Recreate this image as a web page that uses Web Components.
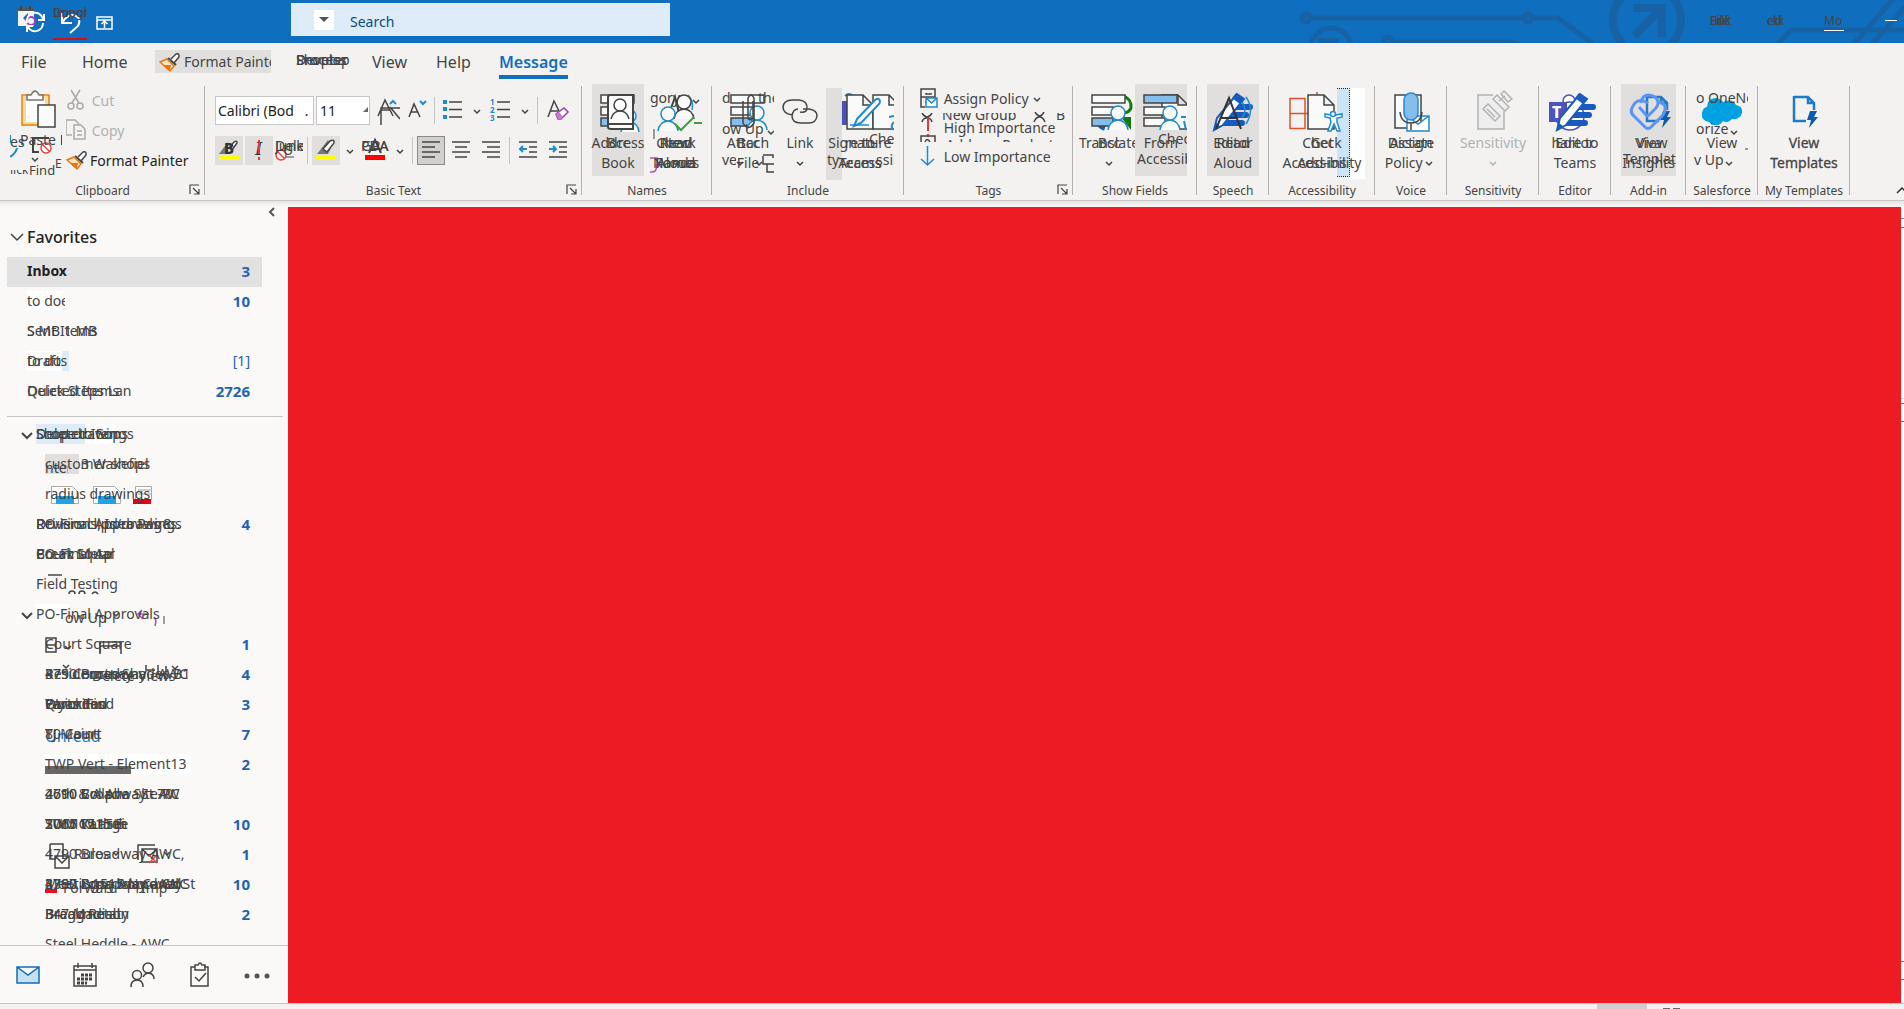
<!DOCTYPE html>
<html lang="en">
<head>
<meta charset="utf-8">
<title>Inbox</title>
<style>
    html, body { margin: 0; height: 100%; }
    body {
        font-family: "Noto Sans", "Open Sans", sans-serif;
        font-size: 14px;
        color: #444;
        background: #f3f2f1;
        overflow: hidden;
    }
    mail-app { height: 100%; }
</style>
</head>
<body>
<mail-app>
    <title-bar slot="title"></title-bar>
    <tab-strip slot="tabs"></tab-strip>

    <ribbon-bar slot="ribbon">
        <ribbon-group caption="Clipboard" launcher>
            <paste-tools></paste-tools>
        </ribbon-group>
        <ribbon-group caption="Basic Text" launcher>
            <text-tools></text-tools>
        </ribbon-group>
        <ribbon-group caption="Names" gap>
            <ribbon-button icon="address" line1="Address|Bcc" line2="Book" active></ribbon-button>
            <ribbon-button icon="names" line1="Check|Read|New" line2="Names|Aloud|Fonda"></ribbon-button>
            <over-text x="68" y="4" w="34">gory</over-text>
        </ribbon-group>
        <ribbon-group caption="Include">
            <ribbon-button icon="attach" line1="Attach|Bcc" line2="File"></ribbon-button>
            <ribbon-button icon="link" line1="Link" chevron></ribbon-button>
            <ribbon-button icon="signature" line1="Signature|re to" line2="Teams|Access" width="68"></ribbon-button>
            <over-text x="10" y="4" w="12">d</over-text>
            <over-text x="46" y="4" w="16">the</over-text>
            <over-text x="10" y="35" w="44">ow Up</over-text>
            <over-text x="10" y="66" w="14">ve</over-text>
            <over-text x="157" y="45" w="25">Check</over-text>
            <over-text x="115" y="66" w="14">ty</over-text>
            <over-text x="164" y="66" w="18">ssib</over-text>
        </ribbon-group>
        <ribbon-group caption="Tags" launcher>
            <tag-tools></tag-tools>
        </ribbon-group>
        <ribbon-group caption="Show Fields">
            <ribbon-button icon="bcc" line1="Translate|Bcc" chevron></ribbon-button>
            <ribbon-button icon="from" line1="From" line2=" " active></ribbon-button>
            <over-text x="85" y="45" w="29">Check</over-text>
            <over-text x="64" y="65" w="50">Accessibility</over-text>
        </ribbon-group>
        <ribbon-group caption="Speech">
            <ribbon-button icon="read" line1="Read|Editor" line2="Aloud" active></ribbon-button>
        </ribbon-group>
        <ribbon-group caption="Accessibility">
            <ribbon-button icon="access" line1="Check|Get" line2="Accessibility|Add-ins" width="86"></ribbon-button>
        </ribbon-group>
        <ribbon-group caption="Voice">
            <ribbon-button icon="dictate" line1="Dictate|Assign" line2="Policy    "></ribbon-button>
        </ribbon-group>
        <ribbon-group caption="Sensitivity">
            <ribbon-button icon="sensitivity" line1="Sensitivity" chevron width="72" off></ribbon-button>
        </ribbon-group>
        <ribbon-group caption="Editor">
            <ribbon-button icon="editor" line1="Editor|hare to" line2="Teams"></ribbon-button>
        </ribbon-group>
        <ribbon-group caption="Add-in">
            <ribbon-button icon="insights" line1="Viva|  View" line2="Insights" width="55" active></ribbon-button>
            <over-text x="12" y="65" w="53">Templates</over-text>
        </ribbon-group>
        <ribbon-group caption="Salesforce">
            <ribbon-button icon="salesforce" line1="View" line2=" "></ribbon-button>
            <over-text x="10" y="4" w="52">o OneNote</over-text>
            <over-text x="10" y="35" w="34">orize</over-text>
            <over-text x="8" y="66" w="30">v Up</over-text>
        </ribbon-group>
        <ribbon-group caption="My Templates">
            <ribbon-button icon="templates" line1="View" line2="Templates" width="72" strong></ribbon-button>
        </ribbon-group>
    </ribbon-bar>

    <folder-pane slot="side">
        <folder-row slot="favorites" name="Inbox" count="3" selected></folder-row>
        <folder-row slot="favorites" name="to do" count="10" marks="0:35:4:20:#fff"><over-text x="54" y="4" w="4">e</over-text></folder-row>
        <folder-row slot="favorites" name="Sent Items|S MB 1 MB"></folder-row>
        <folder-row slot="favorites" name="Drafts|to do" count="[1]" marks="0:35:4:20:#fff,35:7:4:20:#deecf9"></folder-row>
        <folder-row slot="favorites" name="Deleted Items|Quick Steps Lan" count="2726"></folder-row>

        <folder-row level="1" open name="Shop drawings|Deleted Items|Scope to Sop" marks="0:49:4:20:#deecf9,49:30:4:20:#fff"></folder-row>
        <folder-row level="2" name="customer shops" marks="0:34:4:20:#e1dfdd"><over-text x="74" y="4" w="68">3 Wakefiel</over-text><over-text x="38" y="8" w="23">nter</over-text></folder-row>
        <folder-row level="2" name="radius drawings" icon="files"></folder-row>
        <folder-row level="1" name="PO-Final Approvals 8.|Drivers clips/drawings|Revisions, Idea Pages." count="4"></folder-row>
        <folder-row level="1" name="PO-Final Ap|Break Metal|Court Squar"></folder-row>
        <folder-row level="1" name="Field Testing" icon="marks"></folder-row>
        <folder-row level="1" open name="PO-Final Approvals" icon="reply" marks="0:33:4:20:#fff"><over-text x="58" y="8" w="44">ow Up</over-text></folder-row>
        <folder-row level="2" name="Court Square" count="1" icon="boxes"></folder-row>
        <folder-row level="2" name="4790 Broadway - AWC|Residences Shades B1|375 Courtney" count="4" icon="trash"><over-text x="85" y="6" w="94">Delete Views</over-text></folder-row>
        <folder-row level="2" name="Favorites|Quick Find|Parts End|Wyandan" count="3"></folder-row>
        <folder-row level="2" name="80 Court|TJ Maint" count="7"><over-text x="38" y="6" w="60" size="16" color="#1083d6">Unread</over-text></folder-row>
        <folder-row level="2" name="TWP Vert - Element13" count="2" marks="0:146:4:20:#fff,0:86:16:8:#666"></folder-row>
        <folder-row level="2" name="4790 Broadway - AW|2610 Col Ave - St 70|46th &amp; Alpha Site-PC"></folder-row>
        <folder-row level="2" name="3065 W 15th|TWMC Large|2011 Karlsei|SUM 1515 E" count="10"></folder-row>
        <folder-row level="2" name="4790 Broadway-AWC," count="1" icon="rules"><over-text x="67" y="4" w="36">Rules</over-text></folder-row>
        <folder-row level="2" name="4790 Broadway - AWC|2300 E 1515 N Canal St|Meetings - Approved|3767 Long Island Cty" count="10" marks="0:12:19:4:#e81123"><over-text x="56" y="8" w="56">Forward</over-text><over-text x="134" y="8" w="30">Imp</over-text></folder-row>
        <folder-row level="2" name="347 Madison|Breakmetal|Bragg Realty" count="2"></folder-row>
        <folder-row level="2" name="Steel Heddle - AWC"></folder-row>
    </folder-pane>
</mail-app>

<script>
const INK = '#444';
const BLUE = '#1e8bcd';
const SKY = '#83beec';

// shared shapes
const chevron = (x, y, c = INK) => `<path d="M${x - 3} ${y - 2}l3 3 3-3" stroke="${c}" stroke-width="1.5" fill="none"/>`;
const person = (x, y, c, r = 7) => `<g stroke="${c}" stroke-width="1.5" fill="#fafafa"><path d="M${x - r - 3} ${y + r + 10}q1-9 ${r + 3}-10 ${r + 2} 1 ${r + 3} 10"/><circle cx="${x}" cy="${y}" r="${r}"/></g>`;
const bars = (x, fill1, fill3) => `<g stroke="${INK}" stroke-width="1.5"><path d="M${x} 91h33v8h-33z" fill="${fill1}"/><path d="M${x} 103h21v8h-21z" fill="#fafafa"/><path d="M${x} 114h21v8h-21z" fill="${fill3}"/></g>`;
const page = (x, w = 26) => `<path d="M${x} 91h${w - 10}l10 10v24h-${w}zM${x + w - 10} 91v10h10" fill="#fafafa" stroke="${INK}" stroke-width="1.5"/>`;
const pen = (x) => `<path d="M${x + 22} 103h14M${x + 16} 111h16M${x + 10} 119h18" stroke="#185abd" stroke-width="6" stroke-linecap="round"/><path d="M${x} 126l3-12 20-24 7 5-21 26z" fill="#fff" stroke="#185abd" stroke-width="2"/><path d="M${x + 22} 89l8 6-4 5-8-6zM${x} 126l2-7 5 4z" fill="#185abd"/>`;
const brush = (x, y) => `<path d="M${x + 11} ${y + 6}l5-5q2-1 3 1v2l-5 6" fill="#fff" stroke="${INK}" stroke-width="1.5"/><path d="M${x + 8} ${y + 5}l8 7" stroke="${INK}" stroke-width="2"/><path d="M${x} ${y + 9}l7-3 7 7-4 5z" fill="#fbe6c8" stroke="#e8780c" stroke-width="1.5"/><path d="M${x + 3} ${y + 12}l8 0-1 5-2 0z" fill="#e8780c"/>`;
const bolt = (x) => `<path d="M${x} 93h14l6 6v7M${x + 14} 93v6h6M${x} 92v25h12" fill="none" stroke="#1f7bc4" stroke-width="2.5"/><path d="M${x + 16} 107h7l-3 6h4l-9 11 2-8h-4z" fill="#0b5cad"/>`;
const lines = (xs) => `<path d="${xs.map((p, i) => `M${p[0]} ${6 + i * 5}h${p[1]}`).join('')}" stroke="${INK}" stroke-width="1.5"/>`;

// name: [viewBox, markup]
const ICONS = {
    sync: ['0 0 30 36', `<path d="M1 5h16v16h-16z" fill="#f4f4f4"/><path d="M1 3h16v3h-16z" fill="#555"/><path d="M4 1v4M13 1v4" stroke="#444" stroke-width="2"/><path d="M6 13l5-5v10z" fill="#2b5cc4"/><circle cx="14" cy="16" r="4" fill="none" stroke="#a044b4" stroke-width="2"/><path d="M10 18a8 8 0 0 1 16-4M27 9v6h-6M26 18a8 8 0 0 1-15 4M10 27v-6h6" fill="none" stroke="#fff" stroke-width="2"/><path d="M1 34h2M10 34h2M24 34h3" stroke="#555"/>`],
    undo: ['0 0 34 36', `<path d="M9 8v10h10M9 18q5-9 12-8 8 3 4 11l-8 7" fill="none" stroke="#fff" stroke-width="2"/><path d="M0 34h34" stroke="#d1101c" stroke-width="2"/>`],
    popout: ['0 0 18 36', `<path d="M1 12h15v12h-15zM1 15h15M8.500 23v-7M5.500 19l3-3 3 3" fill="none" stroke="#fff" stroke-width="1.500"/>`],
    brush: ['0 0 22 22', brush(1, 2)],
    scissors: ['0 0 20 22', `<path d="M5 1l8 13M14 1l-8 13" stroke="#aaa" stroke-width="1.5"/><circle cx="5" cy="17" r="3" fill="none" stroke="#aaa" stroke-width="1.5"/><circle cx="14" cy="17" r="3" fill="none" stroke="#aaa" stroke-width="1.5"/>`],
    copy: ['0 0 20 22', `<path d="M6 16h-6V1h9l4 4M8 6h7l4 4v10h-11zM11 12h5M11 16h5" fill="none" stroke="#aaa" stroke-width="1.500"/>`],
    paste: ['10 84 52 92', `<path d="M24 97h23v27h-23z" fill="#fff" stroke="#f9dc9c" stroke-width="4"/><path d="M22 95h27v30h-27z" fill="none" stroke="#e8820c" stroke-width="1.5"/><path d="M27 100v-5h4q4-8 8 0h4v5z" fill="#fafafa" stroke="#777" stroke-width="1.5"/><path d="M38 105h17v22h-17z" fill="#fafafa" stroke="${INK}" stroke-width="1.5"/><path d="M10 135v8M17 148q-1 5-7 9" stroke="${BLUE}" stroke-width="2" fill="none"/><path d="M33 138v14h6M33 138h16" stroke="${INK}" stroke-width="2" fill="none"/><circle cx="46" cy="148" r="5" fill="#fff" stroke="#e8443f" stroke-width="1.5"/><path d="M42 144l8 8" stroke="#e8443f" stroke-width="1.5"/><path d="M61.500 135v10" stroke="${INK}"/>${chevron(35, 160)}`],
    grow: ['372 96 28 29', `<path d="M378 116l7-16 8 16M380 110h10M381 125v-17h19M390 107l10 12" fill="none" stroke="${INK}" stroke-width="1.5"/><path d="M390 104l3-3 3 3" fill="none" stroke="${BLUE}" stroke-width="2"/>`],
    shrink: ['402 96 28 29', `<path d="M409 117l5-13 6 13M411 112h7" fill="none" stroke="${INK}" stroke-width="1.5"/><path d="M420 101l3 3 3-3" fill="none" stroke="${BLUE}" stroke-width="2"/>`],
    bullets: ['439 96 28 29', `<path d="M443 100h4v4h-4zM443 107h4v4h-4zM443 115h4v4h-4z" fill="${BLUE}"/><path d="M449 102h13M449 109.500h13M449 117h13" stroke="${INK}" stroke-width="1.5"/>`],
    numbers: ['487 96 28 29', `<g fill="${BLUE}" font-size="8" font-weight="700"><text x="490" y="105">1</text><text x="490" y="113">2</text><text x="490" y="121">3</text></g><path d="M497 102h13M497 109.500h13M497 117h13" stroke="${INK}" stroke-width="1.5"/>`],
    clear: ['542 96 28 29', `<path d="M548 117l6-16 5 10M550 111h8" fill="none" stroke="${INK}" stroke-width="1.5"/><path d="M556 114l8-6 4 4-7 7h-3z" fill="#fff" stroke="#9b3bab" stroke-width="1.5"/><path d="M556 114l2 5h3l2-2-4-5z" fill="#c77bd2"/>`],
    bold: ['215 136 28 29', `<path d="M219 154l9-12v12z" fill="#777"/><path d="M229 148l5-6q3-2 3 1l-5 7" fill="#fff" stroke="${INK}" stroke-width="1.5"/><path d="M219 155h20v5h-20z" fill="#ff0"/><text x="224" y="154" font-size="15" font-weight="800" fill="#333">B</text>`],
    italic: ['245 136 28 29', `<text x="255" y="155" font-size="18" font-style="italic" font-weight="700" font-family="Liberation Serif" fill="#333">I</text><path d="M259 140v14M259 157v3" stroke="#e8343f" stroke-width="2"/>`],
    underline: ['275 136 28 29', `<circle cx="281" cy="155" r="5" fill="none" stroke="#e8443f" stroke-width="1.5"/><path d="M277 151l8 8" stroke="#e8443f" stroke-width="1.500"/><path d="M286 157h8" stroke="${INK}"/><text x="283" y="155" fill="${INK}">U</text>`],
    highlight: ['312 136 28 29', `<path d="M317 154l11-14 3 8-3 6z" fill="#777"/><path d="M323 149l7-8q5-2 4 2l-7 9z" fill="#fff" stroke="${INK}" stroke-width="1.5"/><path d="M316 155h20v5h-20z" fill="#ff0"/>`],
    color: ['360 136 30 29', `<path d="M369 153l6-13 6 13M371 149h8" fill="none" stroke="${INK}" stroke-width="2"/><path d="M365 155h20v5h-20z" fill="#f00"/>`],
    left: ['0 0 28 29', lines([[5, 18], [5, 13], [5, 18], [5, 13]])],
    center: ['0 0 28 29', lines([[5, 18], [8, 12], [5, 18], [8, 12]])],
    right: ['0 0 28 29', lines([[5, 18], [10, 13], [5, 18], [10, 13]])],
    outdent: ['514 136 28 29', `<path d="M519 142h18M529 147h8M529 152h8M519 157h18" stroke="${INK}" stroke-width="1.5"/><path d="M520 149h7M523 146l-3 3 3 3" fill="none" stroke="${BLUE}" stroke-width="2"/>`],
    indent: ['544 136 28 29', `<path d="M549 142h18M559 147h8M559 152h8M549 157h18" stroke="${INK}" stroke-width="1.5"/><path d="M549 149h7M553 146l3 3-3 3" fill="none" stroke="${BLUE}" stroke-width="2"/>`],
    chevron: ['0 0 16 12', '<path d="M5 5l3 3 3-3" stroke="currentColor" stroke-width="1.5" fill="none"/>'],
    launcher: ['0 0 12 12', `<path d="M1 10V1h9M4 4l6 6M10 5v5h-5" fill="none" stroke="${INK}" stroke-width="1.2"/>`],

    address: ['592 86 52 44', `${bars(601, '#fafafa', SKY)}${person(630, 112, BLUE, 6)}<path d="M608 93q0-2 3-2h22v34h-22q-3 0-3-2zM608 120h25" fill="#fafafa" stroke="${INK}" stroke-width="2"/><circle cx="620" cy="101" r="6" fill="#fff" stroke="${INK}" stroke-width="1.500"/><path d="M611 115q2-8 9-8t9 8" fill="none" stroke="${INK}" stroke-width="1.5"/>`],
    names: ['650 86 52 92', `<path d="M688 91q6 6 4 15" fill="none" stroke="${BLUE}" stroke-width="1.500"/><path d="M669 110l6-17 5 20" fill="none" stroke="${INK}" stroke-width="2"/>${person(684, 98, INK)}${person(668, 110, BLUE)}<path d="M675 120l6 6 13-13M694 119h8" fill="none" stroke="#3f9c45" stroke-width="2"/>${chevron(696, 98)}<path d="M654 125v10" stroke="#999" stroke-width="2"/>${chevron(676, 160)}<path d="M650 154h7v8M650 168q8 1 6-8" fill="none" stroke="#a551b5" stroke-width="1.500"/>`],
    attach: ['722 86 52 92', `${bars(731, '#fafafa', SKY)}${person(757, 109, BLUE)}<path d="M753 97v17q-5 4-5-1V94q3-6 6 0v25q-6 9-11 0V97" fill="none" stroke="${INK}" stroke-width="1.500"/>${chevron(771, 129)}${chevron(740, 160)}${chevron(759, 160)}<path d="M763 151h10v3M763 152v8h4v8h7M767 160h7" fill="none" stroke="${INK}" stroke-width="1.500"/>`],
    link: ['774 86 52 44', `<path d="M793 111q-10-1-10-8 1-7 9-7h7q9 1 8 9-1 4-7 3M803 105h6q8 1 8 7-1 7-8 7h-8q-9 0-9-7 1-7 6-7" fill="none" stroke="${INK}" stroke-width="1.500"/>`],
    signature: ['826 84 68 92', `<path d="M826 84h16v92h-16z" fill="#e1dfdd"/><path d="M845 92q4-4 8 0" stroke="${BLUE}" fill="none" stroke-width="2"/><path d="M842 97h10v24h-10z" fill="#4b53bc"/>${page(847, 26)}${page(873, 26)}<path d="M857 115l18-19q4-3 5 1 0 3-2 4l-17 18-7 3z" fill="#fafafa" stroke="${BLUE}" stroke-width="2"/><path d="M850 121h19" stroke="${BLUE}" stroke-width="1.5"/><path d="M889 113l5-1M894 118q-4 4-1 8" fill="none" stroke="${BLUE}" stroke-width="2"/>`],
    bcc: ['1083 86 52 44', `<path d="M1105 124q-6-2-6-8" stroke="#185abd" stroke-width="6" fill="none"/><path d="M1124 92q8 4 7 12-3 6-8 4" fill="none" stroke="#107c10" stroke-width="3"/><path d="M1121 113h10v13z" fill="#107c10"/>${bars(1092, '#fafafa', SKY)}${person(1118, 109, BLUE)}`],
    from: ['1135 86 52 44', `${page(1162, 26)}${bars(1144, SKY, '#fafafa')}${person(1170, 109, BLUE)}<path d="M1181 113h5M1184 117l2 9" stroke="${BLUE}" stroke-width="2"/>`],
    read: ['1207 86 52 44', `${pen(1214)}<path d="M1216 125l13-31 12 31M1220 114h16" fill="none" stroke="#333" stroke-width="2"/><path d="M1242 98q6 8 0 16M1246 93q9 13 0 27" fill="none" stroke="${BLUE}" stroke-width="1.500"/>`],
    access: ['1279 84 86 92', `<path d="M1350 84h15v91h-15z" fill="#fff"/><path d="M1337 84.500h12.500v88h-12.500" fill="#cce4f7" stroke="#222" stroke-dasharray="1 1"/><path d="M1290 94.500h15v30h-15zM1290 109.500h32M1317 88v18" fill="none" stroke="#d9532c" stroke-width="1.500"/>${page(1308, 26)}<path d="M1328 127l3-9-1-4-5-1v-3l6 1h5l6-1v3l-5 1v4l3 9h-3l-3-7-3 7z" fill="#fff" stroke="${BLUE}" stroke-width="1.500"/><circle cx="1333" cy="110" r="2.500" fill="#fff" stroke="${BLUE}" stroke-width="1.500"/>`],
    dictate: ['1385 86 52 92', `<path d="M1395 91h26v33h-26z" fill="#fafafa" stroke="${INK}" stroke-width="1.5"/><path d="M1407 112h22v15h-22zM1407 112l11 8 11-8" fill="#fff" stroke="${BLUE}" stroke-width="1.5"/><rect x="1404" y="89" width="14" height="27" rx="7" fill="${SKY}" stroke="#2b88d8" stroke-width="1.500"/><path d="M1400 108q1 11 11 11t11-11M1411 119v7" fill="none" stroke="${INK}" stroke-width="1.500"/>${chevron(1429, 160)}`],
    sensitivity: ['1458 86 72 44', `<path d="M1494 91h-15v34h26v-18" fill="#eee" stroke="#b3b3b3" stroke-width="1.5"/><path d="M1489 100l12 12-5 5-12-12zM1488 105l8 8M1494 95l12 12 4-4-12-12zM1502 90l3-3 8 8-4 3zM1500 97l6-5" fill="#eee" stroke="#b3b3b3" stroke-width="1.500"/>`],
    editor: ['1549 86 52 44', `<circle cx="1569" cy="97" r="6" fill="#fff" stroke="#4b53bc" stroke-width="1.500"/><circle cx="1570" cy="112" r="14" fill="#fff" stroke="#4b53bc" stroke-width="1.500"/><path d="M1549 98h18v20h-18z" fill="#4b53bc"/><text x="1552" y="114" font-size="16" font-weight="800" fill="#fff">T</text>${pen(1557)}`],
    insights: ['1621 86 55 44', `${bolt(1647)}<path d="M1648 99q-8-5-13 0l-2 3q-4 6 1 10l11 11q3 3 6 0l12-12q5-7-1-13M1641 99q1-8 8-8 8 1 9 7 0 4-2 6l-8 8M1658 98q7 0 8 8M1639 103l9 10" fill="none" stroke="#5b93f5" stroke-width="3"/>`],
    salesforce: ['1696 86 52 92', `<path d="M1709 118q-8-1-7-9 1-6 5-6 0-8 8-9 5 0 8 4 10-4 13 3 7 1 6 8-2 7-10 6-4 5-9 2-3 5-8 4-5-1-6-3z" fill="#00a1e0"/>${chevron(1734, 129)}${chevron(1729, 160)}<path d="M1745 145h3" stroke="${INK}"/>`],
    templates: ['1768 86 72 44', bolt(1794)],

    policy: ['916 84 24 29', `<path d="M925 107h-4v-18h14v9M921 97h14M926 93v1h5v-1M926 101v1h3" fill="none" stroke="${INK}" stroke-width="1.5"/><path d="M926 98h11v9h-11zM926 98l5.500 5 5.500-5" fill="#fff" stroke="${BLUE}" stroke-width="1.5"/>`],
    high: ['916 113 24 29', `<path d="M922 113q5 8 10 0M922 122q1-4 5-4t5 4" fill="none" stroke="${INK}" stroke-width="1.500"/><path d="M928 117v14M928 134v3" stroke="#e8343f" stroke-width="2"/><path d="M921 142v-6h14v6M925 142q2-5 5 0" fill="none" stroke="${INK}" stroke-width="1.5"/>`],
    low: ['916 142 24 29', `<path d="M927.500 146v19M921 159l6.500 6 6.500-6" fill="none" stroke="${BLUE}" stroke-width="1.5"/>`],
    people: ['0 0 14 12', `<path d="M2 0q5 8 9 0M1 10q2-5 5.500-5t5.500 5" fill="none" stroke="${INK}" stroke-width="1.500"/>`],

    // fragments that sit over folder names; origin is the left edge of the row
    files: ['0 0 160 30', `<g fill="#fff" stroke="#aaa"><path d="M44.500 6.500h21l6 6v11h-27zM86.500 6.500h21l6 6v11h-27zM128.500 6.500h16v13h-16z"/></g><path d="M49 16h18v8h-18zM91 16h18v8h-18z" fill="#1fa3e8"/><path d="M131 10h13M131 14h13" stroke="#999"/><path d="M126 19h18v5h-18z" fill="#e60012"/>`],
    marks: ['0 0 160 30', `<path d="M41 5h14" stroke="${INK}" stroke-width="1.500"/><path d="M62 24a3 3 0 1 1 6 0M72 24a3 3 0 1 1 6 0M85 24q3-4 6 0" fill="none" stroke="${INK}" stroke-width="1.5"/>`],
    reply: ['0 0 160 30', `<path d="M135 10l-4 4 5 5M131 14h11M147 17q3 3 1 9" fill="none" stroke="#a551b5" stroke-width="1.500"/><path d="M157 16v8" stroke="${INK}"/>${chevron(109, 15)}`],
    boxes: ['0 0 160 30', `<path d="M39 8h10v14h-10zM39 15h10M93 24v-12h21v12M93 16h20" fill="none" stroke="${INK}" stroke-width="1.500"/>${chevron(61, 18)}`],
    trash: ['0 0 180 30', `<path d="M139 5v5h9M151 5v9h8v-8" fill="none" stroke="${INK}" stroke-width="1.500"/>${chevron(168, 8)}${chevron(59, 7)}`],
    rules: ['0 0 170 30', `<path d="M43 4h13v15M43 4v15h6M48 16h14v12h-14zM48 16l7 7 7-7M131 20v-15h17M135 9h15v13h-15zM135 9l7 7 8-7" fill="none" stroke="${INK}" stroke-width="1.500"/><path d="M142 15l8 8M150 15l-8 8" stroke="#e8443f" stroke-width="1.500"/>${chevron(109, 14)}${chevron(160, 14)}`],

    mail: ['0 0 28 26', `<path d="M3 5h22v16h-22zM3 5l11 8 11-8" fill="#c7e0f4" stroke="#0f6cbd" stroke-width="1.500"/>`],
    calendar: ['0 0 28 26', `<path d="M3 4h22v20h-22zM3 8h22M7 1v5M21 1v5" fill="none" stroke="${INK}" stroke-width="1.5"/><path d="M10 13h12M6 17h16M6 21h10" stroke="${INK}" stroke-width="3" stroke-dasharray="3 1"/>`],
    contacts: ['0 0 28 26', `<g fill="none" stroke="${INK}" stroke-width="1.5"><circle cx="8" cy="13" r="4.500"/><path d="M2 25q0-7 6-7t6 7"/><circle cx="19" cy="6" r="5"/><path d="M14 15q2-4 6-4 5 1 5 6"/></g>`],
    tasks: ['0 0 28 26', `<path d="M9 5h-4v19h17v-19h-4M9 3h3q2-4 4 0h3v5h-10zM9 15l4 4 7-8" fill="none" stroke="${INK}" stroke-width="1.5"/>`],
    more: ['0 0 28 26', `<g fill="#555"><circle cx="4" cy="14" r="2.500"/><circle cx="14" cy="14" r="2.500"/><circle cx="24" cy="14" r="2.500"/></g>`]
};

function svg(name) {
    const [box, body] = ICONS[name];
    const [, , w, h] = box.split(' ');
    return `<svg viewBox="${box}" width="${w}" height="${h}" aria-hidden="true">${body}</svg>`;
}

const stack = (names) => names.split('|').map((n) => `<span>${n.replace('&', '&amp;')}</span>`).join('');

const RESET = `
    button, select, input { font: inherit; color: inherit; border: 0; padding: 0; margin: 0; background: none; }
    svg { display: block; flex: none; }
    * { box-sizing: border-box; }
`;

class BaseElement extends HTMLElement {
    connectedCallback() {
        if (this.shadowRoot) return;
        this.attachShadow({ mode: 'open' });
        this.shadowRoot.innerHTML = `<style>${RESET}${this.styles()}</style>${this.markup()}`;
    }

    attr(name, fallback = '') {
        return this.getAttribute(name) || fallback;
    }
}

class MailApp extends BaseElement {
    styles() {
        return `
            :host { display: flex; flex-direction: column; }
            main { flex: 1; min-height: 0; display: flex; background: linear-gradient(#e4e4e4, #faf9f8 6px); }
            .pane { flex: 1; margin-top: 6px; background: #ed1c24; }
            .edge { width: 3px; margin-top: 6px; background: #fff; overflow: hidden; }
            .edge i { display: block; height: 1px; background: #777; }
            footer { height: 6px; border-top: 1px solid #c8c6c4; display: flex; justify-content: flex-end; padding-right: 224px; gap: 3px; align-items: flex-end; }
            footer b { width: 50px; height: 5px; background: #d0cecd; margin-right: 13px; }
            footer i { width: 7px; height: 1px; background: #666; }
        `;
    }

    markup() {
        return `
            <slot name="title"></slot>
            <slot name="tabs"></slot>
            <slot name="ribbon"></slot>
            <main>
                <slot name="side"></slot>
                <section class="pane"></section>
                <div class="edge">
                    <i style="margin-top:11px;background:#4a90c8"></i><i style="margin-top:8px"></i>
                    <i style="margin-top:170px;background:#ddd"></i><i style="margin-top:4px"></i><i style="margin-top:17px"></i>
                    <i style="margin-top:539px"></i><i style="margin-top:17px"></i>
                </div>
            </main>
            <footer><b></b><i></i><i></i></footer>
        `;
    }
}

class TitleBar extends BaseElement {
    styles() {
        return `
            :host { display: flex; height: 43px; background: #106ebe; position: relative; overflow: hidden; padding-left: 17px; }
            .quick { display: flex; width: 274px; padding-top: 5px; gap: 6px; }
            .quick button { height: 36px; }
            .quick button:last-child { margin-left: 3px; }
            label { display: flex; align-items: center; width: 379px; height: 33px; margin-top: 3px; background: #deecf9; padding-left: 23px; }
            .drop { width: 20px; height: 20px; background: #fff; display: grid; place-items: center; margin-right: 16px; }
            .drop::before { content: ""; border: 5px solid transparent; border-top-color: #555; border-bottom: 0; }
            input { flex: 1; outline: 0; color: #0b4a83; padding-top: 4px; }
            input::placeholder { color: #0b4a83; opacity: 1; }
            .art { position: absolute; right: 0; top: 0; }
            .right { margin-left: auto; position: relative; display: flex; font-size: 12px; padding: 12px 7px 0 0; line-height: 18px; }
            .names { display: grid; width: 57px; }
            .names span { grid-area: 1 / 1; }
            .names:nth-child(3) { width: 20px; height: 19px; margin-right: 41px; border-bottom: 1px solid #fff; }
            .min { width: 12px; height: 1px; background: #fff; margin-top: 8px; }
        `;
    }

    markup() {
        return `
            <svg class="art" width="620" height="43" viewBox="1284 0 620 43" fill="none" stroke="#1762a5" stroke-width="5">
                <circle cx="1306" cy="18" r="4"/><path d="M1311 18h212M1533 18h25l37 27M1394 42h118l10 4"/>
                <circle cx="1528" cy="18" r="4"/><circle cx="1388" cy="41" r="4"/>
                <circle cx="1331" cy="48" r="20"/><path d="M1318 41h21" stroke-width="6"/>
                <circle cx="1647" cy="20" r="34" stroke-width="8"/>
                <path d="M1634 36l26-26M1633 8h29v29" stroke-width="8"/>
                <path d="M1777 45l14-15h113M1853 45l42-48M1871 45l36-40"/>
            </svg>
            <div class="quick">
                <button aria-label="Sync">${svg('sync')}</button>
                <button aria-label="Undo">${svg('undo')}</button>
                <button aria-label="Pop out">${svg('popout')}</button>
            </div>
            <label><span class="drop"></span><input aria-label="Search" placeholder="Search"></label>
            <div class="right">
                <div class="names">${stack('Edit|File|Bef')}</div>
                <div class="names">${stack('ckl|etk')}</div>
                <div class="names">${stack('Mo')}</div>
                <button class="min" aria-label="Minimize"></button>
            </div>
            <over-text x="53" y="3" w="34" size="12">Google</over-text>
            <over-text x="53" y="3" w="34" size="12">Import</over-text>
        `;
    }
}

class TabStrip extends BaseElement {
    styles() {
        return `
            :host { display: block; height: 41px; font-size: 16px; }
            nav { display: flex; padding: 7px 0 0 21px; line-height: 24px; }
            a { color: inherit; text-decoration: none; height: 29px; white-space: nowrap; }
            .file { width: 61px; }
            .home { width: 73px; }
            .view { width: 64px; }
            .help { width: 63px; }
            .brush { display: flex; align-items: center; width: 116px; height: 23px; background: #e1dfdd; font-size: 14px; line-height: 28px; white-space: nowrap; overflow: hidden; padding-left: 4px; gap: 3px; margin-right: 25px; }
            .stack { display: grid; width: 76px; font-size: 14px; line-height: 20px; }
            .stack span { grid-area: 1 / 1; }
            .active { color: #106ebe; font-weight: 600; border-bottom: 4px solid #106ebe; }
        `;
    }

    markup() {
        return `
            <nav>
                <a class="file" href="#">File</a>
                <a class="home" href="#">Home</a>
                <button class="brush">${svg('brush')}Format Painter</button>
                <a class="stack" href="#">${stack('Develop|Shopter|Process')}</a>
                <a class="view" href="#">View</a>
                <a class="help" href="#">Help</a>
                <a class="active" href="#">Message</a>
            </nav>
        `;
    }
}

class RibbonBar extends BaseElement {
    styles() {
        return `
            :host { display: flex; border-bottom: 1px solid #c8c6c4; height: 116px; position: relative; }
            button { margin: auto 0 5px auto; }
        `;
    }

    markup() {
        return `<slot></slot><button aria-label="Collapse ribbon"><svg width="8" height="8"><path d="M1 6l5-5 5 5" fill="none" stroke="#333" stroke-width="1.500"/></svg></button>`;
    }
}

class RibbonGroup extends BaseElement {
    styles() {
        return `
            :host {
                display: block; position: relative; flex: none; padding: 0 10px;
                background: linear-gradient(#b3b0ad, #b3b0ad) right 2px / 1px 109px no-repeat;
            }
            .body { display: flex; height: 92px; }
            :host([gap]) .body { gap: 6px; }
            .caption { text-align: center; font-size: 12px; line-height: 16px; margin: 7px -10px 0; white-space: nowrap; }
            .launch { position: absolute; right: 4px; bottom: 4px; }
        `;
    }

    markup() {
        const launcher = this.hasAttribute('launcher')
            ? `<button class="launch" aria-label="${this.attr('caption')} options">${svg('launcher')}</button>` : '';
        return `<div class="body"><slot></slot></div><div class="caption">${this.attr('caption')}</div>${launcher}`;
    }
}

class RibbonButton extends BaseElement {
    styles() {
        return `
            :host { display: block; width: ${this.attr('width', '52')}px; }
            button { display: block; width: 100%; height: 92px; padding-top: 2px; position: relative; }
            :host([active]) button { background: #e1dfdd; }
            :host([off]) { color: #b1b1b1; }
            :host([strong]) { -webkit-text-stroke: 0.3px; }
            .icon { height: 43px; position: relative; }
            .icon.full { margin-top: -2px; height: 45px; }
            .line { display: grid; grid-template-columns: minmax(0, 1fr); justify-items: center; align-items: start; line-height: 20px; height: 20px; white-space: pre; position: relative; }
            .line span, .line svg { grid-area: 1 / 1; }
            .line svg { margin-top: 4px; }
        `;
    }

    markup() {
        const second = this.hasAttribute('chevron') ? svg('chevron') : stack(this.attr('line2'));
        const full = ICONS[this.attr('icon')][0].includes(' 84 ') ? 'full' : '';
        return `
            <button ${this.hasAttribute('off') ? 'disabled' : ''}>
                <div class="icon ${full}">${svg(this.attr('icon'))}</div>
                <div class="line">${stack(this.attr('line1'))}</div>
                <div class="line">${second}</div>
            </button>
        `;
    }
}

// a piece of text laid over its positioned parent
class OverText extends BaseElement {
    styles() {
        return `
            :host {
                position: absolute; left: ${this.attr('x')}px; top: ${this.attr('y')}px;
                width: ${this.attr('w')}px; height: ${this.attr('h', '20')}px;
                font-size: ${this.attr('size', '14')}px; color: ${this.attr('color', '#444')};
                line-height: 20px; white-space: nowrap; overflow: hidden; pointer-events: none;
            }
            div { margin-top: -${this.attr('skip', '0')}px; }
        `;
    }

    markup() {
        return '<div><slot></slot></div>';
    }
}

class PasteTools extends BaseElement {
    styles() {
        return `
            :host { display: flex; width: 185px; gap: 4px; }
            .paste { width: 52px; height: 92px; position: relative; }
            .paste svg { position: absolute; left: 0; top: 0; }
            .paste span { position: absolute; left: 10px; top: 46px; line-height: 20px; }
            .small { display: flex; flex-direction: column; padding-top: 1px; }
            .small button { display: flex; align-items: center; gap: 2px; height: 30px; color: #222; }
            .small button:disabled { color: #b1b1b1; }
        `;
    }

    markup() {
        return `
            <button class="paste">${svg('paste')}<span>Paste</span></button>
            <div class="small">
                <button disabled>${svg('scissors')}&nbsp;Cut</button>
                <button disabled>${svg('copy')}&nbsp;Copy</button>
                <button>${svg('brush')}Format Painter</button>
            </div>
            <over-text x="10" y="48" w="16">es</over-text>
            <over-text x="29" y="76" w="28" size="13">Find</over-text>
            <over-text x="55" y="70" w="7" size="12">E</over-text>
            <over-text x="10" y="86" w="18" h="5" skip="10" size="12">lick</over-text>
        `;
    }
}

class TextTools extends BaseElement {
    styles() {
        return `
            :host { display: block; width: 357px; padding-top: 12px; }
            .row { display: flex; gap: 2px; height: 29px; margin-bottom: 11px; }
            select { appearance: none; background: #fff; border: 1px solid #c8c6c4; padding-left: 2px; color: #222; width: 99px; }
            .size { position: relative; width: 54px; }
            .size select { width: 54px; height: 29px; padding-left: 3px; }
            .size::after { content: ""; position: absolute; right: 2px; top: 11px; border: 5px solid transparent; border-width: 5px 0 0 5px; border-left: 0; border-top: 5px solid transparent; border-right: 5px solid #666; }
            .row > button { width: 28px; flex: none; position: relative; }
            .row > .chev { width: 16px; display: grid; place-items: center; }
            .row > .wide { width: 30px; }
            .hover { background: #e1dfdd; }
            .picked svg { margin: -1px; }
            .row > .picked { background: #d2d0ce; border: 1px solid #8a8886; }
            hr { width: 1px; height: 27px; margin: 1px 2px; border: 0; background: #c8c6c4; }
        `;
    }

    tool(name, label, cls = '', extra = '') {
        return `<button class="${cls}" aria-label="${label}">${svg(name)}${extra}</button>`;
    }

    markup() {
        const chev = this.tool('chevron', 'More', 'chev');
        return `
            <div class="row">
                <select aria-label="Font"><option>Calibri (Bod&nbsp;&nbsp; .</option></select>
                <div class="size"><select aria-label="Font size"><option>11</option></select></div>
                ${this.tool('grow', 'Grow font')}${this.tool('shrink', 'Shrink font')}<hr>
                ${this.tool('bullets', 'Bullets')}${chev}${this.tool('numbers', 'Numbering')}${chev}<hr>
                ${this.tool('clear', 'Clear formatting')}
            </div>
            <div class="row">
                ${this.tool('bold', 'Bold', 'hover')}${this.tool('italic', 'Italic', 'hover')}
                ${this.tool('underline', 'Underline', '', '<over-text x="0" y="0" w="28">Delete</over-text><over-text x="0" y="0" w="28">Junk</over-text>')}<hr>
                ${this.tool('highlight', 'Highlight', 'hover')}${chev}
                ${this.tool('color', 'Font colour', 'wide', '<over-text x="1" y="0" w="28">PDAS</over-text><over-text x="1" y="0" w="28">GPA</over-text>')}${chev}<hr>
                ${this.tool('left', 'Align left', 'picked')}${this.tool('center', 'Center')}${this.tool('right', 'Align right')}<hr>
                ${this.tool('outdent', 'Decrease indent')}${this.tool('indent', 'Increase indent')}
            </div>
        `;
    }
}

class TagTools extends BaseElement {
    styles() {
        return `
            :host { display: block; width: 149px; }
            button { display: flex; align-items: center; height: 29px; padding-left: 2px; line-height: 20px; white-space: nowrap; }
            .person { position: absolute; left: 129px; top: 28px; }
        `;
    }

    markup() {
        return `
            <button>${svg('policy')}&nbsp;Assign Policy${svg('chevron')}</button>
            <button>${svg('high')}&nbsp;High Importance</button>
            <button>${svg('low')}&nbsp;Low Importance</button>
            <div class="person">${svg('people')}</div>
            <over-text x="38" y="29" w="80" h="8" skip="8">New Group</over-text>
            <over-text x="152" y="29" w="10" h="8" skip="8">B</over-text>
            <over-text x="38" y="55" w="124" h="3" skip="4">&nbsp;Address Products</over-text>
        `;
    }
}

class FolderPane extends BaseElement {
    styles() {
        return `
            :host { display: flex; flex-direction: column; width: 288px; min-height: 0; }
            .collapse { height: 18px; text-align: right; padding: 6px 13px 0 0; }
            .collapse button { display: inline-block; height: 10px; vertical-align: top; }
            h2 { display: flex; align-items: center; gap: 3px; margin: 0 0 2px 10px; font-size: 16px; font-weight: 500; line-height: 36px; color: #222; }
            hr { width: 276px; height: 1px; margin: 9px 0 3px 7px; border: 0; background: #c8c6c4; flex: none; }
            .tree { flex: 1; min-height: 0; overflow: hidden; }
            nav { display: flex; align-items: center; height: 57px; border-top: 1px solid #c8c6c4; padding: 0 17px 0 14px; justify-content: space-between; flex: none; box-sizing: content-box; }
        `;
    }

    markup() {
        const views = ['mail', 'calendar', 'contacts', 'tasks', 'more'];
        return `
            <div class="collapse"><button aria-label="Collapse"><svg width="7" height="10"><path d="M6 1l-4 4 4 4" fill="none" stroke="#555" stroke-width="2"/></svg></button></div>
            <h2><svg width="14" height="10"><path d="M1 2l6 6 6-6" fill="none" stroke="#444" stroke-width="1.500"/></svg>Favorites</h2>
            <slot name="favorites"></slot>
            <hr>
            <div class="tree"><slot></slot></div>
            <nav>${views.map((v) => `<button aria-label="${v}">${svg(v)}</button>`).join('')}</nav>
        `;
    }
}

class FolderRow extends BaseElement {
    styles() {
        const indent = { 0: 20, 1: 29, 2: 38 }[this.attr('level', '0')];
        return `
            :host { display: block; position: relative; height: 30px; margin: 0 26px 0 7px; flex: none; }
            :host([selected]) { background: #e1e1e1; color: #222; font-weight: 700; }
            a { display: flex; justify-content: space-between; padding: 0 12px 0 ${indent}px; line-height: 28px; color: inherit; text-decoration: none; white-space: nowrap; position: relative; }
            .name { display: grid; position: relative; }
            .name span { grid-area: 1 / 1; z-index: 1; }
            .name i { position: absolute; }
            .count { color: #1f64b0; font-size: 15px; font-weight: 700; }
            .plain { font-weight: 400; font-size: 14px; }
            .chev { position: absolute; left: 14px; top: 11px; }
            .over { position: absolute; left: 0; top: 0; }
        `;
    }

    markup() {
        const marks = this.attr('marks').split(',').filter(Boolean).map((m) => {
            const [x, w, y, h, c] = m.split(':');
            return `<i style="left:${x}px;width:${w}px;top:${y}px;height:${h}px;background:${c}"></i>`;
        }).join('');
        const count = this.attr('count');
        const icon = this.attr('icon');
        return `
            ${icon === 'files' ? `<div class="over">${svg(icon)}</div>` : ''}
            <a href="#">
                <div class="name">${marks}${stack(this.attr('name'))}</div>
                <span class="count ${count.startsWith('[') ? 'plain' : ''}">${count}</span>
            </a>
            ${this.hasAttribute('open') ? '<svg class="chev" width="12" height="9"><path d="M1 2l5 5 5-5" fill="none" stroke="#444" stroke-width="2"/></svg>' : ''}
            ${icon && icon !== 'files' ? `<div class="over">${svg(icon)}</div>` : ''}
            <slot></slot>
        `;
    }
}

customElements.define('over-text', OverText);
customElements.define('title-bar', TitleBar);
customElements.define('tab-strip', TabStrip);
customElements.define('ribbon-bar', RibbonBar);
customElements.define('ribbon-group', RibbonGroup);
customElements.define('ribbon-button', RibbonButton);
customElements.define('paste-tools', PasteTools);
customElements.define('text-tools', TextTools);
customElements.define('tag-tools', TagTools);
customElements.define('folder-row', FolderRow);
customElements.define('folder-pane', FolderPane);
customElements.define('mail-app', MailApp);
</script>
</body>
</html>
